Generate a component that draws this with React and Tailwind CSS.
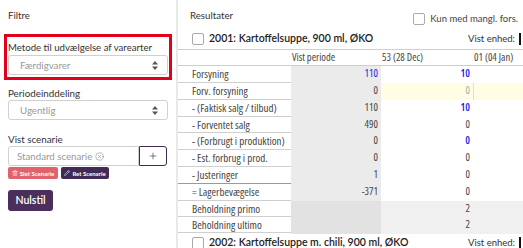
import { CircleX, Trash2, Pencil, Plus } from "lucide-react";

const rows = [
  { label: "Forsyning", v: "110", vBlue: true, a: "10", aBlue: true, h: "h-[17px]" },
  { label: "Forv. forsyning", v: "0", a: "0", yellow: true, h: "h-[17px]" },
  { label: "- (Faktisk salg / tilbud)", v: "110", a: "10", aBlue: true, h: "h-[17px]" },
  { label: "- Forventet salg", v: "490", a: "0", h: "h-[16px]" },
  { label: "- (Forbrugt i produktion)", v: "0", a: "0", aBlue: true, h: "h-[17px]" },
  { label: "- Est. forbrug i prod.", v: "0", a: "0", h: "h-[17px]" },
  { label: "- Justeringer", v: "1", a: "0", dark: true, h: "h-[17px]" },
  { label: "= Lagerbevægelse", v: "-371", a: "0", h: "h-[17px]" },
  { label: "Beholdning primo", v: "", a: "2", total: true, h: "h-[16px]" },
  { label: "Beholdning ultimo", v: "", a: "2", total: true, h: "h-[16px]" },
];

function SortIcon() {
  return (
    <svg width="6" height="9" viewBox="0 0 6 9" className="fill-[#555]">
      <path d="M3 0 L6 3.5 H0 Z" />
      <path d="M3 9 L6 5.5 H0 Z" />
    </svg>
  );
}

function Select({ value }) {
  return (
    <div className="flex h-[20px] items-center justify-between rounded-[3px] border border-[#d0d0d0] pl-[11px] pr-[9px] text-[9.7px] text-[#999]">
      <span>{value}</span>
      <SortIcon />
    </div>
  );
}

function Checkbox() {
  return <div className="h-[12px] w-[12px] shrink-0 rounded-[2px] border border-[#aaa] bg-white" />;
}

function Row({ r }) {
  const border = r.dark ? "border-[#9a9a9a]" : "border-[#cfcfcf]";
  const valBg = r.total ? "bg-[#f0f0f0]" : r.yellow ? "bg-[#fffde3]" : "bg-white";
  return (
    <div className={`grid grid-cols-[113px_90px_92px_92px] border-b ${border} ${r.h}`}>
      <div className="flex items-center whitespace-nowrap pl-[14px] font-stretch-semi-condensed text-[11px] text-[#444]">{r.label}</div>
      <div
        className={`flex items-center justify-end pr-[3px] ${r.total ? "bg-[#e2e2e2]" : "bg-[#ebebeb]"} ${
          r.vBlue ? "text-[#1a1adb]" : "text-[#444]"
        }`}
      >
        {r.v}
      </div>
      <div
        className={`flex items-center justify-end pr-[3px] ${valBg} ${
          r.aBlue ? "font-semibold text-[#1a1adb]" : r.yellow ? "text-[#aaa]" : "text-[#444]"
        }`}
      >
        {r.a}
      </div>
      <div className={`${valBg} ${r.yellow ? "border-l border-[#e6e2b5]" : ""}`} />
    </div>
  );
}

function ProductTitle({ text }) {
  return (
    <div className="flex h-[20px] items-center justify-between pl-[14px] pr-[2px]">
      <div className="flex items-center gap-[5px] whitespace-nowrap">
        <Checkbox />
        <span className="text-[10.5px] font-semibold text-[#222]">{text}</span>
      </div>
      <div className="flex items-center gap-[4px] text-[9.5px] text-[#333]">
        <span>Vist enhed:</span>
        <div className="h-[12px] w-[2px] bg-[#111]" />
      </div>
    </div>
  );
}

export default function App() {
  return (
    <div className="flex h-[248px] w-[523px] overflow-hidden bg-white font-['Lato',sans-serif] text-[#333]">
      {/* Filters */}
      <aside className="w-[178px] shrink-0 border-r-[2px] border-[#e8e8e8] px-[8px] pt-[9px]">
        <div className="text-[9.7px] leading-[12px] text-[#333]">Filtre</div>

        <div className="-mx-[4px] mt-[13px] border-[3px] border-[#e3001b] px-[1px] pb-[2px] pt-[3px]">
          <div className="whitespace-nowrap text-[9.6px] leading-[15px] text-[#333]">Metode til udvælgelse af varearter</div>
          <Select value="Færdigvarer" />
        </div>

        <div className="mt-[6px] text-[9.8px] leading-[14px]">Periodeinddeling</div>
        <Select value="Ugentlig" />

        <div className="mt-[12px] text-[9.8px] leading-[14px]">Vist scenarie</div>
        <div className="flex h-[20px]">
          <div className="flex w-[131px] items-center gap-[3px] rounded-l-[3px] border border-[#d0d0d0] pl-[8px] text-[9.7px] text-[#999]">
            <span>Standard scenarie</span>
            <CircleX size={9} strokeWidth={1.5} className="text-[#888]" />
          </div>
          <div className="flex w-[28px] items-center justify-center rounded-r-[3px] border border-[#3e2d50] text-[#333]">
            <Plus size={10} strokeWidth={1.5} />
          </div>
        </div>

        <div className="mt-[1px] flex gap-[3px]">
          <div className="flex h-[12px] w-[50px] items-center justify-center gap-[2px] rounded-[2px] bg-[#e0626d] text-[6px] font-bold text-white">
            <Trash2 size={6} strokeWidth={2} />
            <span>Slet Scenarie</span>
          </div>
          <div className="flex h-[12px] w-[48px] items-center justify-center gap-[2px] rounded-[2px] bg-[#3f2b55] text-[6px] font-bold text-white">
            <Pencil size={6} strokeWidth={2} />
            <span>Ret Scenarie</span>
          </div>
        </div>

        <button className="mt-[11px] flex h-[21px] w-[45px] items-center justify-center rounded-[3px] bg-[#4a2f5d] text-[10.5px] font-semibold text-white">
          Nulstil
        </button>
      </aside>

      {/* Results */}
      <main className="min-w-0 flex-1 overflow-hidden">
        <div className="flex h-[29px] justify-between pl-[12px] pr-[5px] pt-[9px]">
          <div className="text-[9.7px] leading-[12px]">Resultater</div>
          <div className="mt-[4px] flex h-[12px] items-center gap-[5px] text-[9.5px] text-[#444]">
            <Checkbox />
            <span>Kun med mangl. fors.</span>
          </div>
        </div>

        <ProductTitle text="2001: Kartoffelsuppe, 900 ml, ØKO" />

        <div className="font-['Open_Sans',sans-serif] font-stretch-condensed text-[10.5px]">
          <div className="grid h-[17px] grid-cols-[113px_90px_92px_92px] border-y border-[#cfcfcf] text-[#444]">
            <div />
            <div className="flex items-center pl-[1px]">Vist periode</div>
            <div className="flex items-center pl-[1px]">53 (28 Dec)</div>
            <div className="flex items-center pl-[1px]">01 (04 Jan)</div>
          </div>
          {rows.map((r) => (
            <Row key={r.label} r={r} />
          ))}
        </div>

        <ProductTitle text="2002: Kartoffelsuppe m. chili, 900 ml, ØKO" />
      </main>
    </div>
  );
}
